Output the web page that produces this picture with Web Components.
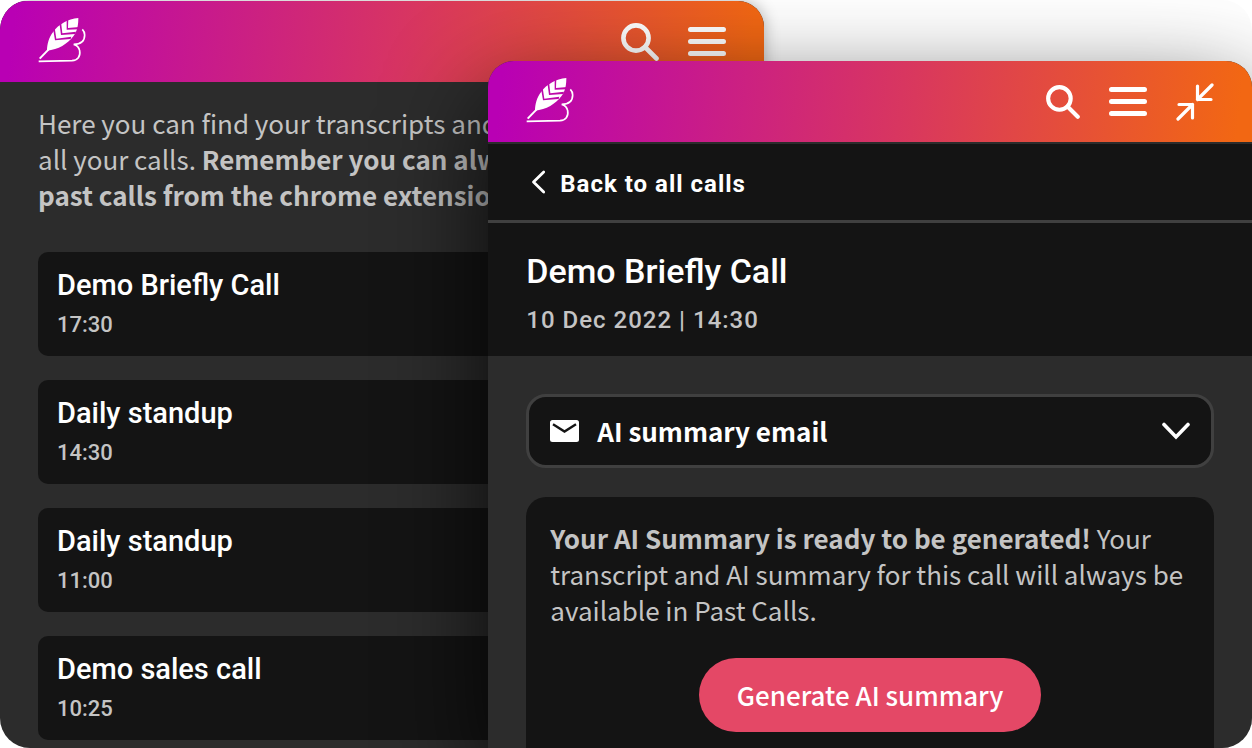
<!DOCTYPE html>
<html lang="en">
<head>
<meta charset="utf-8">
<title>Briefly</title>
<style>
  html, body { margin: 0; height: 100%; background: #fff; }
  body { font-family: Roboto, sans-serif; color: #fff; }
</style>
</head>
<body>
<brief-stage>
  <brief-window slot="back" class="back">
    <brief-header slot="header"></brief-header>
    <call-list>
      <span slot="intro">Here you can find your transcripts and<br>all your calls. <b>Remember you can always<br>past calls from the chrome extension</b></span>
      <call-card time="17:30">Demo Briefly Call</call-card>
      <call-card time="14:30">Daily standup</call-card>
      <call-card time="11:00">Daily standup</call-card>
      <call-card time="10:25">Demo sales call</call-card>
    </call-list>
  </brief-window>
  <brief-window slot="front" class="front">
    <brief-header slot="header" collapsible></brief-header>
    <back-link>Back to all calls</back-link>
    <call-title date="10 Dec 2022 | 14:30">Demo Briefly Call</call-title>
    <call-detail>
      <summary-picker>AI summary email</summary-picker>
      <summary-panel>
        <span slot="text"><b>Your AI Summary is ready to be generated!</b> Your<br>transcript and AI summary for this call will always be available in Past Calls.</span>
        <span slot="action">Generate AI summary</span>
      </summary-panel>
    </call-detail>
  </brief-window>
</brief-stage>

<script>
const define = (name, html) => customElements.define(name, class extends HTMLElement {
  constructor() {
    super();
    this.attachShadow({ mode: 'open' }).innerHTML = typeof html === 'function' ? html(this) : html;
  }
});
const textFont = '"Noto Sans CJK SC", "Noto Sans", sans-serif';

define('brief-stage', `
<style>
  :host { display: grid; grid-template-columns: 39fr 22fr 39fr; grid-template-rows: 100vh; overflow: hidden; border-radius: 30px; }
  ::slotted(*) { grid-row: 1; min-width: 0; }
  ::slotted(.back) { grid-column: 1 / 3; margin-top: 1px; box-shadow: 0 0 16px rgba(0,0,0,.3); }
  ::slotted(.front) { grid-column: 2 / 4; margin-top: 61px; box-shadow: 0 38px 100px rgba(0,0,0,.8); }
</style>
<slot name="back"></slot><slot name="front"></slot>`);

define('brief-window', `
<style>
  :host { display: flex; flex-direction: column; background: #2c2c2c; border-radius: 26px 26px 0 0; overflow: hidden; }
</style>
<slot name="header"></slot><slot></slot>`);

define('brief-logo', `
<style>:host { display: block; } svg { display: block; }</style>
<svg width="48" height="46" viewBox="114 50 144 138" fill="none" role="img" aria-label="Briefly">
  <mask id="barbs" maskUnits="userSpaceOnUse" x="110" y="45" width="150" height="145">
    <rect x="110" y="45" width="150" height="145" fill="#fff"/>
    <g fill="#000">
      <path d="M200 50 L205 50 L204 83 L238 80 L238 87 L200 88 Z"/>
      <path d="M178 66 L183 64 L187 99 L228 94 L226 101 L183 104 Z"/>
      <path d="M159 84 L164 82 L169 115 L214 109 L212 116 L165 120 Z"/>
    </g>
  </mask>
  <path mask="url(#barbs)" fill="#fff" d="M141 151 C141 131 147 110 160 94 C176 72 203 56 235 53 C235 72 233 91 220 108 C203 130 175 149 141 151 Z"/>
  <path d="M146 147 L119 175" stroke="#fff" stroke-width="6"/>
  <path d="M116 183 L216 181 C233 180 242 168 239 151 C237 141 232 135 221 132 C243 132 254 121 254 104 C254 98 251 91 247 87" stroke="#fff" stroke-width="5"/>
</svg>`);

define('brief-header', host => `
<style>
  :host { display: flex; align-items: center; justify-content: space-between; flex: none; height: 81px; padding: 0 38px; background: linear-gradient(96deg, #b900b4 2%, #d83660 54%, #f26713 98%); }
  nav { display: flex; align-items: center; gap: 29px; }
  button { padding: 0; border: 0; background: none; color: inherit; display: block; }
  svg { display: block; fill: none; stroke: currentColor; }
  brief-logo { margin-bottom: 4px; }
</style>
<brief-logo></brief-logo>
<nav>
  <button aria-label="Search"><svg width="${host.hasAttribute('collapsible') ? 34 : 38}" height="${host.hasAttribute('collapsible') ? 34 : 38}" viewBox="0 0 38 38" stroke-width="4.6"><circle cx="15" cy="15" r="12.6"/><path d="M24 24 L35.5 35.5" stroke-linecap="round"/></svg></button>
  <button aria-label="Menu"><svg width="38" height="30" viewBox="0 0 38 30" stroke-width="5"><path d="M2.5 2.5H35.5M2.5 14.5H35.5M2.5 26.5H35.5" stroke-linecap="round"/></svg></button>
  ${host.hasAttribute('collapsible') ? `<button aria-label="Collapse"><svg width="38" height="38" viewBox="0 0 38 38" stroke-width="3.2" stroke-linecap="round" stroke-linejoin="round"><path d="M36 2 L21.5 16.5 M21.5 3 V16.5 H35 M2 36 L16.5 21.5 M3 21.5 H16.5 V35"/></svg></button>` : ''}
</nav>`);

define('call-list', `
<style>
  :host { display: flex; flex-direction: column; gap: 24px; padding: 23px 38px; }
  p { margin: 0 0 15px; font: 400 26px/36px ${textFont}; color: #c4c4c4; white-space: nowrap; }
</style>
<p><slot name="intro"></slot></p><slot></slot>`);

define('call-card', host => `
<style>
  :host { display: block; background: #141414; border-radius: 10px; padding: 15px 19px 17px; }
  h3 { margin: 0; font-weight: 500; font-size: 29px; line-height: 36px; }
  time { display: block; margin-top: 8px; font-weight: 500; font-size: 22px; line-height: 28px; color: #c4c4c4; }
</style>
<h3><slot></slot></h3><time>${host.getAttribute('time')}</time>`);

define('back-link', `
<style>
  :host { display: block; background: #141414; border-top: 2px solid #2c2c2c; border-bottom: 3px solid #404040; }
  a { display: flex; align-items: center; gap: 14px; height: 76px; padding: 0 43px; color: #fff; text-decoration: none; font-weight: 700; font-size: 24px; line-height: 32px; letter-spacing: 1px; }
  svg { fill: none; stroke: currentColor; stroke-width: 2.8; stroke-linecap: round; stroke-linejoin: round; }
  span { margin-top: 4px; }
</style>
<a href="#calls"><svg width="15" height="24" viewBox="0 0 15 24"><path d="M12.7 2 L2.5 12 L12.7 22"/></svg><span><slot></slot></span></a>`);

define('call-title', host => `
<style>
  :host { display: block; background: #141414; padding: 28px 38px 20px; }
  h2 { margin: 0; font-weight: 500; font-size: 34px; line-height: 40px; }
  p { margin: 13px 0 0; font-weight: 500; font-size: 24px; line-height: 32px; letter-spacing: 1px; color: #c4c4c4; }
</style>
<h2><slot></slot></h2><p>${host.getAttribute('date')}</p>`);

define('call-detail', `
<style>:host { display: flex; flex-direction: column; flex: 1; gap: 29px; padding: 38px 38px 0; }</style>
<slot></slot>`);

define('summary-picker', `
<style>
  :host { display: block; }
  button { box-sizing: border-box; width: 100%; height: 74px; display: flex; align-items: center; gap: 18px; padding: 0 21px; border: 3px solid #404040; border-radius: 20px; background: #141414; color: #fff; font: 700 26px/36px ${textFont}; text-align: left; }
  span { flex: 1; }
  svg { display: block; }
</style>
<button aria-haspopup="listbox">
  <svg width="29" height="22" viewBox="0 0 29 22"><rect width="29" height="22" rx="2.5" fill="#fff"/><path d="M3 4.2 L14.5 11.5 L26 4.2" fill="none" stroke="#141414" stroke-width="2.4"/></svg>
  <span><slot></slot></span>
  <svg width="28" height="18" viewBox="0 0 28 18" fill="none" stroke="#fff" stroke-width="3.6" stroke-linecap="round"><path d="M2 2.5 L14 15 L26 2.5"/></svg>
</button>`);

define('summary-panel', `
<style>
  :host { display: block; flex: 1; background: #141414; border-radius: 20px 20px 0 0; padding: 23px 24px 0; }
  p { margin: 0; font: 400 26px/36px ${textFont}; color: #c4c4c4; }
  button { display: block; margin: 30px auto 0; height: 74px; padding: 0 38px; border: 0; border-radius: 37px; background: #e44866; color: #fff; font: 500 26px/36px ${textFont}; }
</style>
<p><slot name="text"></slot></p>
<button><slot name="action"></slot></button>`);
</script>
</body>
</html>
